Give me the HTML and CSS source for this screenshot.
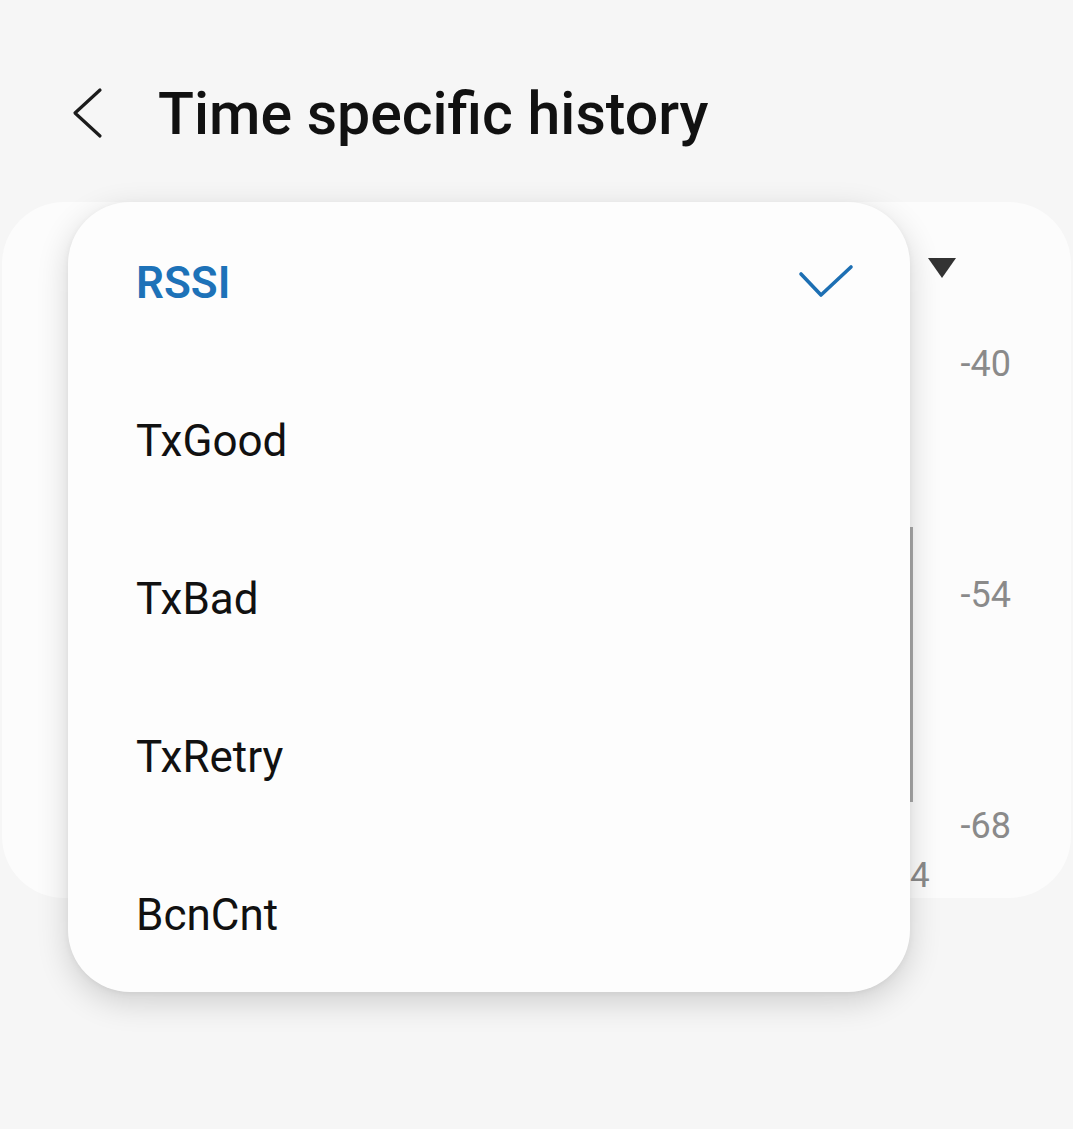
FILE: index.html
```html
<!DOCTYPE html>
<html lang="en">
<head>
    <meta charset="UTF-8">
    <meta name="viewport" content="width=device-width, initial-scale=1.0">
    <title>Time specific history</title>
    <link rel="stylesheet" href="styles.css">
</head>
<body>
    <div class="header">
        <button class="back" aria-label="Back">
            <svg width="34" height="52" viewBox="0 0 34 52">
                <path d="M30 3 L5 26 L30 49" fill="none" stroke="#1c1c1c" stroke-width="3.2" stroke-linecap="round" stroke-linejoin="round"/>
            </svg>
        </button>
        <h1 class="title">Time specific history</h1>
    </div>

    <div class="stage">
        <div class="card">
            <div class="plot">
                <span class="bar"></span>
                <span class="tick">4</span>
            </div>
            <div class="axis">
                <span class="dropdown"></span>
                <span class="axis-label">-40</span>
                <span class="axis-label">-54</span>
                <span class="axis-label">-68</span>
            </div>
        </div>

        <ul class="menu">
            <li class="menu-item selected">
                <span>RSSI</span>
                <svg class="check" width="56" height="36" viewBox="0 0 56 36">
                    <path d="M3 10 L23 31 L53 3" fill="none" stroke="#1d6fb3" stroke-width="3.6" stroke-linecap="round" stroke-linejoin="round"/>
                </svg>
            </li>
            <li class="menu-item">TxGood</li>
            <li class="menu-item">TxBad</li>
            <li class="menu-item">TxRetry</li>
            <li class="menu-item">BcnCnt</li>
        </ul>
    </div>
</body>
</html>
```

FILE: styles.css
```css
body {
    margin: 0;
    min-height: 100vh;
    background: #f6f6f6;
    font-family: Roboto, 'Noto Sans', sans-serif;
    color: #111;
}

.header {
    display: flex;
    align-items: center;
    height: 202px;
    padding-top: 24px;
    padding-left: 70px;
    box-sizing: border-box;
}

.back {
    display: flex;
    padding: 0;
    border: none;
    background: none;
    cursor: pointer;
}

.title {
    margin: 0 0 0 54px;
    font-size: 59px;
    font-weight: 500;
    color: #111;
}

.stage {
    position: relative;
}

.card {
    display: flex;
    height: 696px;
    margin: 0 2px;
    border-radius: 62px;
    background: #fcfcfc;
}

.plot {
    flex: 1;
    position: relative;
}

.bar {
    position: absolute;
    left: 908px;
    top: 325px;
    width: 3px;
    height: 275px;
    background: #a9a9a9;
}

.tick {
    position: absolute;
    left: 908px;
    top: 656px;
    font-size: 35px;
    line-height: 1;
    color: #8a8a8a;
}

.axis {
    display: flex;
    flex-direction: column;
    align-items: flex-end;
    padding: 56px 60px 0 0;
}

.dropdown {
    width: 0;
    height: 0;
    margin-right: 55px;
    border-left: 14px solid transparent;
    border-right: 14px solid transparent;
    border-top: 20px solid #333;
}

.axis-label {
    font-size: 36px;
    line-height: 1;
    color: #8a8a8a;
    margin-top: 195px;
}

.dropdown + .axis-label {
    margin-top: 68px;
}

.menu {
    position: absolute;
    left: 68px;
    top: 0;
    width: 842px;
    height: 790px;
    margin: 0;
    padding: 2px 0 0;
    list-style: none;
    box-sizing: border-box;
    overflow: hidden;
    border-radius: 62px;
    background: #fdfdfd;
    box-shadow: 0 10px 32px rgba(0, 0, 0, 0.16), 0 2px 6px rgba(0, 0, 0, 0.05);
}

.menu-item {
    display: flex;
    align-items: center;
    justify-content: space-between;
    height: 158px;
    padding: 0 56px 0 68px;
    font-size: 44px;
    color: #111;
}

.menu-item.selected {
    color: #1d72b8;
    font-weight: 600;
}

.check {
    margin-top: -2px;
}
```
